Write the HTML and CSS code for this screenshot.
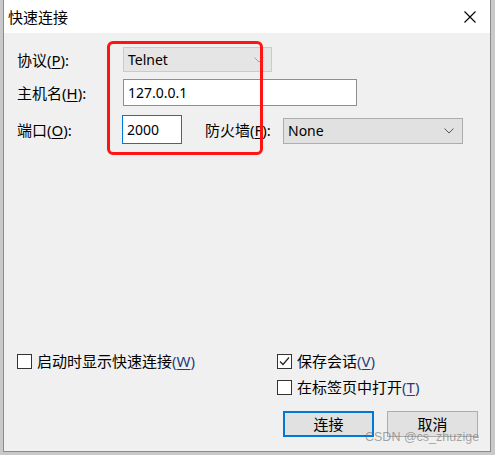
FILE: index.html
```html
<!DOCTYPE html>
<html lang="zh-CN">
<head>
<meta charset="utf-8">
<title>快速连接</title>
<link rel="stylesheet" href="styles.css">
</head>
<body>
<div class="window">
  <div class="titlebar">
    <span class="title">快速连接</span>
    <svg class="close" width="12" height="12" viewBox="0 0 12 12"><path d="M0.5 0.5 L11.5 11.5 M11.5 0.5 L0.5 11.5" stroke="#000" stroke-width="1.1" fill="none"/></svg>
  </div>
  <div class="body">
    <div class="annot"></div>
    <div class="row r1">
      <span class="lbl">协议(<u>P</u>):</span>
      <div class="combo proto"><span class="val">Telnet</span><svg class="arrow" width="10" height="6" viewBox="0 0 10 6"><path d="M0.5 0.5 L5 5 L9.5 0.5" stroke="#a0a0a0" stroke-width="1" fill="none"/></svg></div>
    </div>
    <div class="row r2">
      <span class="lbl">主机名(<u>H</u>):</span>
      <div class="edit host"><span class="val">127.0.0.1</span></div>
    </div>
    <div class="row r3">
      <span class="lbl">端口(<u>O</u>):</span>
      <div class="edit port"><span class="val">2000</span></div>
      <span class="lbl fw">防火墙(<u>F</u>):</span>
      <div class="combo firewall"><span class="val">None</span><svg class="arrow" width="10" height="6" viewBox="0 0 10 6"><path d="M0.5 0.5 L5 5 L9.5 0.5" stroke="#555" stroke-width="1" fill="none"/></svg></div>
    </div>
    <div class="bottom">
      <label class="check c1"><span class="box"></span><span>启动时显示快速连接<span class="mn">(<u>W</u>)</span></span></label>
      <label class="check c2"><span class="box"><svg width="13" height="13" viewBox="0 0 13 13"><path d="M2 6.5 L5 9.5 L11 2.5" stroke="#222" stroke-width="1.2" fill="none"/></svg></span><span>保存会话<span class="mn">(<u>V</u>)</span></span></label>
      <label class="check c3"><span class="box"></span><span>在标签页中打开<span class="mn">(<u>T</u>)</span></span></label>
      <div class="buttons">
        <button class="btn default">连接</button>
        <button class="btn">取消</button>
      </div>
    </div>
    <div class="watermark">CSDN @cs_zhuzige</div>
  </div>
</div>
</body>
</html>
```

FILE: styles.css
```css
html, body {
  margin: 0;
  padding: 0;
}
body {
  width: 495px;
  height: 455px;
  background: #c9c9c9;
  font-family: "Noto Sans", "Noto Sans CJK SC", sans-serif;
  font-size: 15px;
  color: #000;
  overflow: hidden;
}
.window {
  margin-left: 3px;
  width: 488px;
  box-sizing: border-box;
  border-left: 1px solid #8c8c8c;
  border-right: 1px solid #8c8c8c;
  border-bottom: 1px solid #8c8c8c;
  background: #f0f0f0;
}
.titlebar {
  height: 33px;
  background: #fff;
  display: flex;
  align-items: center;
  justify-content: space-between;
  padding: 0 14px 0 4px;
}
.title {
  font-family: "Noto Sans CJK SC", sans-serif;
  font-size: 15px;
  line-height: 20px;
}
.close {
  display: block;
}
.body {
  position: relative;
  height: 418px;
  box-sizing: border-box;
  padding: 14px 0 14px 13px;
  display: flex;
  flex-direction: column;
}
.annot {
  position: absolute;
  left: 103px;
  top: 8px;
  width: 156px;
  height: 114px;
  box-sizing: border-box;
  border: 3px solid #ff1414;
  border-radius: 6px;
}
.row {
  display: flex;
  align-items: center;
}
.r1 { height: 25px; }
.r2 { height: 27px; margin-top: 7px; }
.r3 { height: 29px; margin-top: 9px; }
.lbl {
  width: 106px;
  flex: none;
  line-height: 20px;
}
.lbl u, .mn u {
  text-decoration-thickness: 1px;
  text-underline-offset: 2px;
}
.val {
  font-family: "Noto Sans", sans-serif;
  font-size: 14px;
  line-height: 18px;
}
.combo {
  box-sizing: border-box;
  display: flex;
  align-items: center;
  justify-content: space-between;
  padding: 0 7px 0 4px;
}
.proto {
  width: 149px;
  height: 25px;
  background: #e5e5e5;
  border: 1px solid #cbcbcb;
}
.firewall {
  width: 180px;
  height: 26px;
  background: #e1e1e1;
  border: 1px solid #adadad;
  align-self: flex-end;
  padding-right: 8px;
}
.arrow {
  display: block;
}
.edit {
  box-sizing: border-box;
  background: #fff;
  display: flex;
  align-items: center;
  padding-left: 4px;
}
.host {
  width: 234px;
  height: 27px;
  border: 1px solid #8f8f8f;
}
.port {
  width: 60px;
  height: 29px;
  margin-left: -1px;
  border: 1px solid #0078d7;
  padding-left: 4px;
}
.lbl.fw {
  width: 78px;
  margin-left: 23px;
}
.bottom {
  margin-top: auto;
  display: grid;
  grid-template-columns: 260px 1fr;
  grid-template-rows: 16px 16px 32px;
  row-gap: 10px;
}
.check {
  display: flex;
  align-items: center;
  gap: 5px;
  line-height: 20px;
  white-space: nowrap;
}
.c1 { grid-column: 1; grid-row: 1; }
.c2 { grid-column: 2; grid-row: 1; }
.c3 { grid-column: 2; grid-row: 2; }
.box {
  width: 15px;
  height: 15px;
  box-sizing: border-box;
  border: 1px solid #333;
  background: #fff;
  display: flex;
  align-items: center;
  justify-content: center;
  flex: none;
}
.box svg {
  display: block;
}
.mn {
  color: #1f3f7a;
}
.buttons {
  grid-column: 1 / 3;
  grid-row: 3;
  align-self: end;
  display: flex;
  justify-content: flex-end;
  gap: 13px;
  padding-right: 12px;
}
.btn {
  width: 91px;
  height: 26px;
  box-sizing: border-box;
  background: #e1e1e1;
  border: 1px solid #adadad;
  font-family: "Noto Sans CJK SC", sans-serif;
  font-size: 15px;
  color: #000;
  padding: 0;
  line-height: 20px;
}
.btn.default {
  border: 2px solid #0078d7;
}
.watermark {
  position: absolute;
  left: 361px;
  top: 396px;
  font-family: "Liberation Sans", sans-serif;
  font-size: 12.5px;
  line-height: 16px;
  color: rgba(110, 110, 110, 0.6);
  white-space: nowrap;
}
```
